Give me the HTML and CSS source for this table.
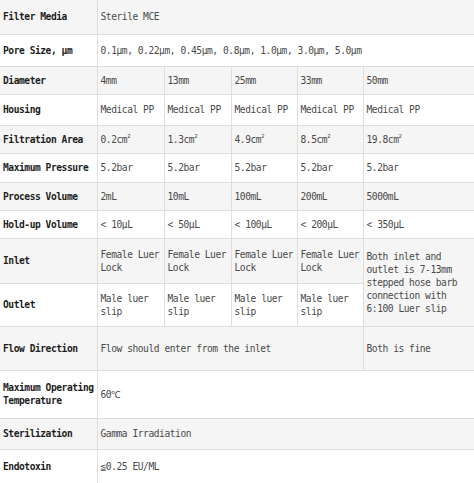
FILE: index.html
```html
<!DOCTYPE html>
<html>
<head>
<meta charset="utf-8">
<link rel="stylesheet" href="styles.css">
</head>
<body>
<table class="spec">
  <colgroup>
    <col class="c-label">
    <col class="c-v">
    <col class="c-v">
    <col class="c-v2">
    <col class="c-v2">
    <col class="c-last">
  </colgroup>
  <tbody>
    <tr class="odd h34"><th>Filter Media</th><td colspan="5">Sterile MCE</td></tr>
    <tr class="even h32"><th>Pore Size, μm</th><td colspan="5">0.1μm, 0.22μm, 0.45μm, 0.8μm, 1.0μm, 3.0μm, 5.0μm</td></tr>
    <tr class="odd h28"><th>Diameter</th><td>4mm</td><td>13mm</td><td>25mm</td><td>33mm</td><td>50mm</td></tr>
    <tr class="even h31"><th>Housing</th><td>Medical PP</td><td>Medical PP</td><td>Medical PP</td><td>Medical PP</td><td>Medical PP</td></tr>
    <tr class="odd h28"><th>Filtration Area</th><td>0.2cm<sup>2</sup></td><td>1.3cm<sup>2</sup></td><td>4.9cm<sup>2</sup></td><td>8.5cm<sup>2</sup></td><td>19.8cm<sup>2</sup></td></tr>
    <tr class="even h29"><th>Maximum Pressure</th><td>5.2bar</td><td>5.2bar</td><td>5.2bar</td><td>5.2bar</td><td>5.2bar</td></tr>
    <tr class="odd h28"><th>Process Volume</th><td>2mL</td><td>10mL</td><td>100mL</td><td>200mL</td><td>5000mL</td></tr>
    <tr class="even h28"><th>Hold-up Volume</th><td>&lt; 10μL</td><td>&lt; 50μL</td><td>&lt; 100μL</td><td>&lt; 200μL</td><td>&lt; 350μL</td></tr>
    <tr class="odd h45"><th>Inlet</th><td>Female Luer Lock</td><td>Female Luer Lock</td><td>Female Luer Lock</td><td>Female Luer Lock</td><td rowspan="2" class="odd-cell">Both inlet and outlet is 7-13mm stepped hose barb connection with 6:100 Luer slip</td></tr>
    <tr class="even h43"><th>Outlet</th><td>Male luer slip</td><td>Male luer slip</td><td>Male luer slip</td><td>Male luer slip</td></tr>
    <tr class="odd h44"><th>Flow Direction</th><td colspan="4">Flow should enter from the inlet</td><td>Both is fine</td></tr>
    <tr class="even h48"><th>Maximum Operating Temperature</th><td colspan="5">60℃</td></tr>
    <tr class="odd h31"><th>Sterilization</th><td colspan="5">Gamma Irradiation</td></tr>
    <tr class="even h34"><th>Endotoxin</th><td colspan="5">≦0.25 EU/ML</td></tr>
  </tbody>
</table>
</body>
</html>
```

FILE: styles.css
```css
html, body {
  margin: 0;
  padding: 0;
  background: #ffffff;
}

.spec {
  border-collapse: collapse;
  table-layout: fixed;
  width: 476px;
  font-family: "DejaVu Sans Mono", "Liberation Mono", monospace;
  font-size: 9.6px;
  letter-spacing: -0.45px;
  line-height: 13px;
}

.c-label { width: 97px; }
.c-v { width: 67px; }
.c-v2 { width: 66px; }
.c-last { width: 113px; }

.spec th,
.spec td {
  border: 1px solid #dedede;
  padding: 0 2px 0 3px;
  vertical-align: middle;
  text-align: left;
  overflow: hidden;
}

.spec tr:first-child th,
.spec tr:first-child td {
  border-top: none;
}

.spec th {
  border-left: none;
  font-weight: bold;
  color: #1e1e1e;
}

.spec td {
  color: #4a4a4a;
}

.odd { background: #f5f5f5; }
.even { background: #ffffff; }
.odd-cell { background: #f5f5f5; }

.spec sup {
  font-size: 5.5px;
  line-height: 0;
  vertical-align: 5px;
}

.h28 { height: 28px; }
.h29 { height: 29px; }
.h31 { height: 31px; }
.h32 { height: 32px; }
.h34 { height: 34px; }
.h43 { height: 43px; }
.h44 { height: 44px; }
.h45 { height: 45px; }
.h48 { height: 48px; }
```
